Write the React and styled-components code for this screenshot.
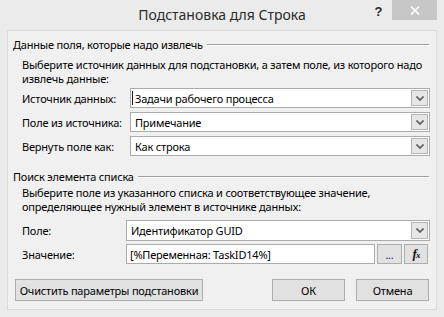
import React from 'react';
import styled, { createGlobalStyle } from 'styled-components';

const Global = createGlobalStyle`
  html, body { margin: 0; padding: 0; }
  body {
    width: 444px; height: 317px; overflow: hidden; background: #ebebeb;
    font-family: "Noto Sans", "Liberation Sans", sans-serif;
  }
`;

const Window = styled.div`
  width: 444px; height: 317px; box-sizing: border-box;
  background: #ebebeb; display: flex; flex-direction: column;
`;

const TitleBar = styled.div`
  height: 30px; flex: none; display: grid;
  grid-template-columns: 76px 1fr 76px; align-items: start;
`;

const Title = styled.div`
  grid-column: 2; text-align: center; font-size: 14px; line-height: 30px; color: #2b2b2b;
`;

const Controls = styled.div`
  display: flex; align-items: flex-start; gap: 3px; padding-right: 7px;
`;

const HelpBtn = styled.div`
  width: 21px; height: 20px; display: flex; align-items: center; justify-content: center;
  font-family: "Liberation Sans", sans-serif; font-weight: bold; font-size: 13px; color: #2b2b2b;
  padding-top: 3px; box-sizing: border-box;
`;

const CloseBtn = styled.div`
  width: 45px; height: 20px; background: #c7c7c7;
  display: flex; align-items: center; justify-content: center;
`;

const Client = styled.div`
  flex: 1; margin: 0 7px 7px; border: 1px solid #dadada; background: #f0f0f0;
  padding: 7px 6px 0 5px; display: flex; flex-direction: column; min-height: 0;
  font-size: 11px; letter-spacing: -0.2px;
`;

const GroupHeader = styled.div`
  display: flex; align-items: center; gap: 4px; height: 14px; line-height: 14px;
  color: #000; margin-top: ${p => p.$mt || 0}px; margin-right: 1px; white-space: nowrap;
  &::after { content: ''; flex: 1; height: 0; border-top: 1px solid #a0a0a0; border-bottom: 1px solid #fff; }
`;

const GroupBody = styled.div`
  padding-left: 9px; display: flex; flex-direction: column;
`;

const Desc = styled.div`
  line-height: 14px; color: #000; white-space: nowrap;
  margin-top: ${p => p.$mt}px;
`;

const Rows = styled.div`
  display: grid; grid-template-columns: ${p => p.$label}px 1fr;
  row-gap: ${p => p.$gap}px; margin-top: ${p => p.$mt}px; align-items: center;
`;

const Label = styled.div`
  color: #000; white-space: nowrap;
`;

const Combo = styled.div`
  height: ${p => p.$h}px; box-sizing: border-box; border: 1px solid #ababab; background: #fff;
  display: flex; align-items: center; padding-left: ${p => (p.$focused ? 1 : 4)}px;
  color: #000; white-space: nowrap;
`;

const Caret = styled.span`
  width: 1px; height: 14px; background: #1a1a1a; margin-right: 2px; flex: none;
`;

const DropBtn = styled.div`
  margin-left: auto; margin-right: 1px; width: 17px; height: calc(100% - 2px); box-sizing: border-box;
  border: 1px solid #b3b3b3; background: #e6e6e6;
  display: flex; align-items: center; justify-content: center;
`;

const ValueRow = styled.div`
  display: flex; gap: 2px; height: 20px; margin-right: 2px;
`;

const Input = styled.div`
  flex: 1; box-sizing: border-box; border: 1px solid #ababab; background: #fff;
  display: flex; align-items: center; padding-left: 3px; color: #000; white-space: nowrap;
`;

const SmallBtn = styled.div`
  width: ${p => p.$w}px; box-sizing: border-box; border: 1px solid #adadad; background: #e1e1e1;
  display: flex; align-items: center; justify-content: center;
  color: #1a1a6e;
`;

const Fx = styled.span`
  font-family: "Liberation Serif", serif; font-style: italic; font-weight: bold; font-size: 13px; color: #111;
  letter-spacing: -1px;
  & small { font-size: 9px; }
`;

const ButtonRow = styled.div`
  display: flex; margin-top: 15px; margin-left: 2px; margin-right: 1px; gap: 11px;
`;

const Button = styled.div`
  width: ${p => p.$w}px; height: 22px; box-sizing: border-box; border: 1px solid #adadad; background: #e1e1e1;
  display: flex; align-items: center; justify-content: center; color: #000; white-space: nowrap;
  margin-left: ${p => (p.$push ? 'auto' : '0')};
`;

const Chevron = () => (
  <svg width="8" height="5" viewBox="0 0 8 5">
    <path d="M0.5 0.5 L4 4 L7.5 0.5" fill="none" stroke="#5a5a5a" strokeWidth="1.6" />
  </svg>
);

const CloseX = () => (
  <svg width="10" height="9" viewBox="0 0 10 9">
    <path d="M1 0.5 L9 8.5 M9 0.5 L1 8.5" stroke="#fff" strokeWidth="1.6" />
  </svg>
);

const ComboBox = ({ text, focused, h = 20 }) => (
  <Combo $focused={focused} $h={h}>
    {focused && <Caret />}
    {text}
    <DropBtn><Chevron /></DropBtn>
  </Combo>
);

export default function App() {
  return (
    <>
      <Global />
      <Window>
        <TitleBar>
          <Title>Подстановка для Строка</Title>
          <Controls>
            <HelpBtn>?</HelpBtn>
            <CloseBtn><CloseX /></CloseBtn>
          </Controls>
        </TitleBar>
        <Client>
          <GroupHeader>Данные поля, которые надо извлечь</GroupHeader>
          <GroupBody>
            <Desc $mt={6}>
              Выберите источник данных для подстановки, а затем поле, из которого надо<br />
              извлечь данные:
            </Desc>
            <Rows $label={108} $gap={4} $mt={2}>
              <Label>Источник данных:</Label>
              <ComboBox text="Задачи рабочего процесса" focused />
              <Label>Поле из источника:</Label>
              <ComboBox text="Примечание" />
              <Label>Вернуть поле как:</Label>
              <ComboBox text="Как строка" />
            </Rows>
          </GroupBody>
          <GroupHeader $mt={14}>Поиск элемента списка</GroupHeader>
          <GroupBody>
            <Desc $mt={2}>
              Выберите поле из указанного списка и соответствующее значение,<br />
              определяющее нужный элемент в источнике данных:
            </Desc>
            <Rows $label={104} $gap={3} $mt={6}>
              <Label>Поле:</Label>
              <ComboBox text="Идентификатор GUID" h={21} />
              <Label>Значение:</Label>
              <ValueRow>
                <Input>[%Переменная: TaskID14%]</Input>
                <SmallBtn $w={25}>...</SmallBtn>
                <SmallBtn $w={24}><Fx>f<small>x</small></Fx></SmallBtn>
              </ValueRow>
            </Rows>
          </GroupBody>
          <ButtonRow>
            <Button $w={188}>Очистить параметры подстановки</Button>
            <Button $w={73} $push>ОК</Button>
            <Button $w={73}>Отмена</Button>
          </ButtonRow>
        </Client>
      </Window>
    </>
  );
}
